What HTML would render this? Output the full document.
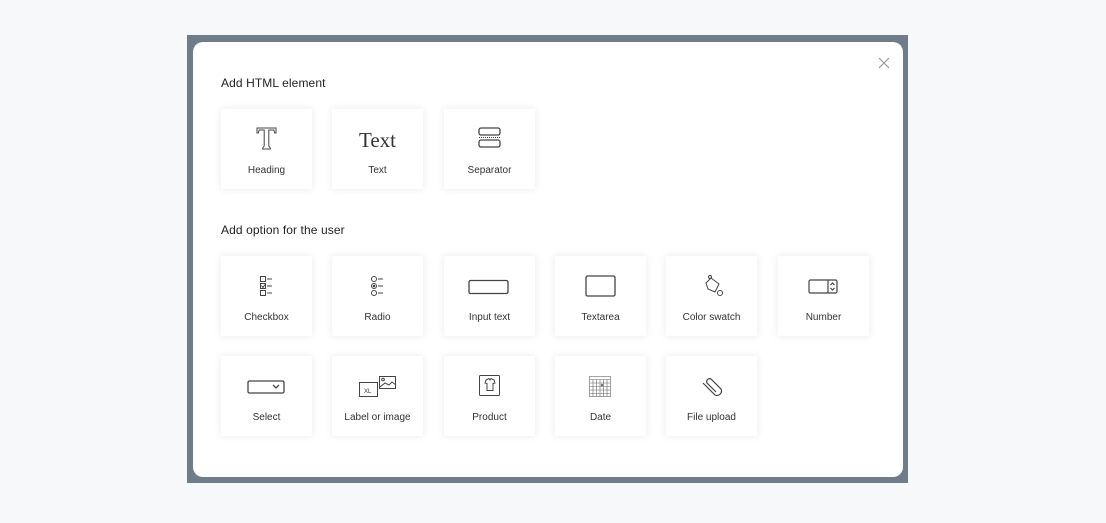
<!DOCTYPE html>
<html><head><style>
*{margin:0;padding:0;box-sizing:border-box}
body{width:1106px;height:523px;background:#f6f8f9;font-family:"Liberation Sans",sans-serif;position:relative;overflow:hidden}
.ov{position:absolute;left:187px;top:35px;width:721px;height:448px;background:#6f7c89}
.modal{position:absolute;left:193px;top:42px;width:710px;height:435px;background:#fff;border-radius:10px}
h3{position:absolute;left:221px;font-size:12px;font-weight:normal;color:#222;letter-spacing:.1px}
.c{position:absolute;width:91px;height:80px;background:#fff;box-shadow:0 0 8px rgba(0,0,0,.09);text-align:center}
.c svg{position:absolute;left:25px;top:14px;width:41px;height:30px}
.c span{position:absolute;left:0;right:0;top:56px;font-size:10px;color:#333}
.x{position:absolute;left:877px;top:56px;width:14px;height:14px}
</style></head><body>
<div class="ov"></div>
<div class="modal"></div>
<svg class="x" viewBox="0 0 14 14"><path d="M2 2L12 12M12 2L2 12" stroke="#999" stroke-width="1.2"/></svg>
<h3 style="top:76px">Add HTML element</h3>
<h3 style="top:223px">Add option for the user</h3>

<div class="c" style="left:221px;top:109px"><svg viewBox="0 0 41 30"><path d="M11 5h19v5h-1.2l-1-3h-5v16l1.5 2v1h-7.6v-1l1.5-2V7h-5l-1 3H11z" fill="none" stroke="#444" stroke-width="1"/></svg><span>Heading</span></div>
<div class="c" style="left:332px;top:109px"><div style="position:absolute;top:19px;left:0;right:0;font-family:'Liberation Serif',serif;font-size:21px;color:#333">Text</div><span>Text</span></div>
<div class="c" style="left:444px;top:109px"><svg viewBox="0 0 41 30"><rect x="10" y="5" width="21" height="7" rx="2" fill="none" stroke="#444" stroke-width="1.3"/><rect x="10" y="17" width="21" height="7" rx="2" fill="none" stroke="#444" stroke-width="1.3"/><path d="M10 14.5h21" stroke="#444" stroke-dasharray="1 1"/></svg><span>Separator</span></div>

<div class="c" style="left:221px;top:256px"><svg viewBox="0 0 41 30"><g fill="none" stroke="#444"><rect x="14.5" y="6.5" width="5" height="5"/><rect x="14.5" y="13.5" width="5" height="5"/><rect x="14.5" y="20.5" width="5" height="5"/><path d="M21 9h5M21 16h5M21 23h5M15.5 15.5l1.5 2 2-3"/></g></svg><span>Checkbox</span></div>
<div class="c" style="left:332px;top:256px"><svg viewBox="0 0 41 30"><g fill="none" stroke="#444"><circle cx="17" cy="9" r="2.5"/><circle cx="17" cy="16" r="2.5"/><circle cx="17" cy="23" r="2.5"/><path d="M21 9h5M21 16h5M21 23h5"/></g><circle cx="17" cy="16" r="1.3" fill="#444"/></svg><span>Radio</span></div>
<div class="c" style="left:444px;top:256px"><svg viewBox="0 0 51 30" style="left:20px;width:51px"><rect x="5" y="10.5" width="39" height="13" rx="1.5" fill="none" stroke="#444" stroke-width="1.3"/></svg><span>Input text</span></div>
<div class="c" style="left:555px;top:256px"><svg viewBox="0 0 41 30"><rect x="6" y="6" width="29" height="20" rx="1.5" fill="none" stroke="#444" stroke-width="1.3"/></svg><span>Textarea</span></div>
<div class="c" style="left:666px;top:256px"><svg viewBox="0 0 41 30"><g fill="none" stroke="#444"><path d="M15 13l5-5 8 6-4 8-7-3z"/><circle cx="19" cy="7" r="1.5"/><circle cx="29" cy="23" r="2.5"/></g></svg><span>Color swatch</span></div>
<div class="c" style="left:778px;top:256px"><svg viewBox="0 0 41 30"><g fill="none" stroke="#444" stroke-width="1.2"><rect x="6" y="10" width="28" height="13" rx="1.5"/><path d="M25 10v13M27.5 15l2-2 2 2M27.5 18l2 2 2-2"/></g></svg><span>Number</span></div>

<div class="c" style="left:221px;top:356px"><svg viewBox="0 0 41 30"><g fill="none" stroke="#444" stroke-width="1.3"><rect x="2" y="11" width="36" height="12" rx="1.5"/><path d="M27 15l3 3 3-3"/></g></svg><span>Select</span></div>
<div class="c" style="left:332px;top:356px"><svg viewBox="0 0 41 30"><g fill="none" stroke="#444"><rect x="2.5" y="12.5" width="18" height="14"/><rect x="22.5" y="6.5" width="16" height="12"/><path d="M23 17l5-4 4 2 3-3 4 3"/><circle cx="26" cy="9.5" r="1.3"/></g><text x="7" y="23" font-size="6" font-family="Liberation Sans" fill="#333">XL</text></svg><span>Label or image</span></div>
<div class="c" style="left:444px;top:356px"><svg viewBox="0 0 41 30"><g fill="none" stroke="#444"><rect x="10.5" y="5.5" width="20" height="20" rx="1"/><path d="M17 10l3-1.5 1 1.5 1-1.5 3 1.5 1 3-2 .5v7h-6v-7l-2-.5z"/></g></svg><span>Product</span></div>
<div class="c" style="left:555px;top:356px"><svg viewBox="0 0 41 30"><g fill="none" stroke="#666" stroke-width=".6"><rect x="9.5" y="6.5" width="21" height="20"/><path d="M9.5 9.5h21M9.5 13h21M9.5 16.5h21M9.5 20h21M9.5 23.5h21M13 9.5v17M16.5 9.5v17M20 9.5v17M23.5 9.5v17M27 9.5v17"/><path d="M21 14l2 2m0-2l-2 2" stroke="#333"/></g></svg><span>Date</span></div>
<div class="c" style="left:666px;top:356px"><svg viewBox="0 0 41 30"><path d="M25 22l-9-9a3 3 0 0 1 4-4l10 10a4.5 4.5 0 0 1-6 6L12 13" fill="none" stroke="#444" stroke-width="1.2"/></svg><span>File upload</span></div>
</body></html>
